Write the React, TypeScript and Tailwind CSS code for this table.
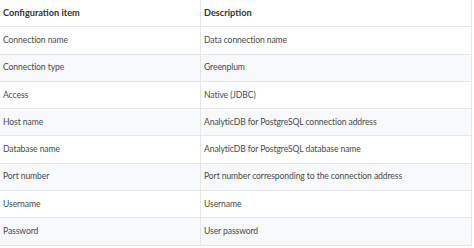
import React from "react";

const rows: [string, string][] = [
  ["Connection name", "Data connection name"],
  ["Connection type", "Greenplum"],
  ["Access", "Native (JDBC)"],
  ["Host name", "AnalyticDB for PostgreSQL connection address"],
  ["Database name", "AnalyticDB for PostgreSQL database name"],
  ["Port number", "Port number corresponding to the connection address"],
  ["Username", "Username"],
  ["Password", "User password"],
];

export default function App() {
  return (
    <div
      className="w-[474px] h-[248px] bg-white overflow-hidden"
      style={{ fontFamily: 'Lato, "Open Sans", sans-serif' }}
    >
      <div className="w-[472px] border-r border-[#e6e6e6]">
        <div className="grid grid-cols-[201px_1fr] h-[27.3px] border-b border-[#e6e6e6] text-[9.2px] font-bold text-[#333]">
          <div className="flex items-center pl-[3px] border-r border-[#e6e6e6]">Configuration item</div>
          <div className="flex items-center pl-[3px]">Description</div>
        </div>
        {rows.map(([a, b], i) => (
          <div
            key={a}
            className={
              "grid grid-cols-[201px_1fr] h-[27.3px] border-b border-[#e6e6e6] text-[8.6px] tracking-[-0.1px] text-[#4a4a4a] " +
              (i % 2 === 1 ? "bg-[#f8f9fa]" : "bg-white")
            }
          >
            <div className="flex items-center pl-[3px] border-r border-[#e6e6e6]">{a}</div>
            <div className="flex items-center pl-[3px]">{b}</div>
          </div>
        ))}
      </div>
    </div>
  );
}
